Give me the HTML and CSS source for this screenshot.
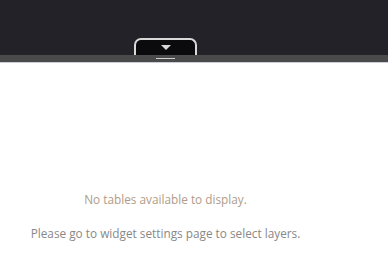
FILE: index.html
```html
<!DOCTYPE html>
<html>
<head>
<meta charset="utf-8">
<link rel="stylesheet" href="styles.css">
</head>
<body>
<div class="top">
  <div class="panel">
    <div class="tab"><span class="arrow"></span></div>
  </div>
</div>
<div class="bar">
  <div class="panel"><span class="grip"></span></div>
</div>
<div class="content">
  <p class="msg primary">No tables available to display.</p>
  <p class="msg secondary">Please go to widget settings page to select layers.</p>
</div>
</body>
</html>
```
FILE: styles.css
```css
html, body {
  margin: 0;
  padding: 0;
  background: #ffffff;
  font-family: "Open Sans", Lato, sans-serif;
}
.top {
  height: 55px;
  background: #232228;
}
.top .panel {
  width: 331px;
  height: 55px;
  display: flex;
  justify-content: center;
  align-items: flex-end;
}
.tab {
  width: 59px;
  height: 15px;
  background: #0b0a0d;
  border: 2px solid #d9d9d9;
  border-bottom: none;
  border-radius: 7px 7px 0 0;
  display: flex;
  justify-content: center;
}
.arrow {
  width: 0;
  height: 0;
  margin-top: 5px;
  border-left: 5px solid transparent;
  border-right: 5px solid transparent;
  border-top: 5px solid #d8d8d8;
}
.bar {
  height: 7px;
  background: #4a4a4a;
  border-bottom: 1px solid #c6cfe0;
}
.bar .panel {
  width: 331px;
  height: 7px;
  display: flex;
  justify-content: center;
  align-items: center;
}
.grip {
  width: 19px;
  height: 1px;
  background: #cfcfcf;
}
.content {
  width: 331px;
  padding-top: 129px;
  text-align: center;
}
.msg {
  margin: 0;
  font-size: 11.8px;
  line-height: 15px;
}
.primary {
  color: #b09c88;
}
.secondary {
  color: #888888;
  margin-top: 19px;
}
```
